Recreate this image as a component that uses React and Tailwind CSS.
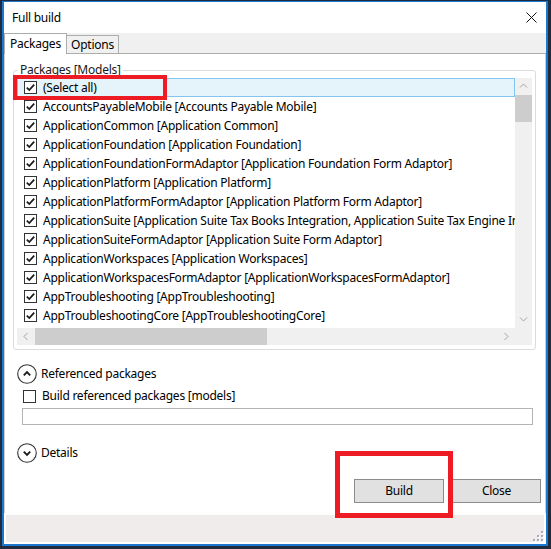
import React from 'react';

const packages = [
  '(Select all)',
  'AccountsPayableMobile [Accounts Payable Mobile]',
  'ApplicationCommon [Application Common]',
  'ApplicationFoundation [Application Foundation]',
  'ApplicationFoundationFormAdaptor [Application Foundation Form Adaptor]',
  'ApplicationPlatform [Application Platform]',
  'ApplicationPlatformFormAdaptor [Application Platform Form Adaptor]',
  'ApplicationSuite [Application Suite Tax Books Integration, Application Suite Tax Engine Integration]',
  'ApplicationSuiteFormAdaptor [Application Suite Form Adaptor]',
  'ApplicationWorkspaces [Application Workspaces]',
  'ApplicationWorkspacesFormAdaptor [ApplicationWorkspacesFormAdaptor]',
  'AppTroubleshooting [AppTroubleshooting]',
  'AppTroubleshootingCore [AppTroubleshootingCore]',
];

const Check = ({ checked }) => (
  <span className="w-[13px] h-[13px] border border-[#333333] bg-white flex items-center justify-center shrink-0">
    {checked && (
      <svg width="11" height="11" viewBox="0 0 11 11">
        <path d="M1.8 5.6 L4.3 8.1 L9.2 2.6" fill="none" stroke="#1a1a1a" strokeWidth="1.7" />
      </svg>
    )}
  </span>
);

const Expander = ({ up, label, className }) => (
  <div className={`flex items-center h-[20px] ml-[12px] ${className}`}>
    <svg width="20" height="20" viewBox="0 0 20 20">
      <circle cx="10" cy="10" r="9.3" fill="white" stroke="#333333" strokeWidth="1.1" />
      <path
        d={up ? 'M6.8 11.4 L10 8.2 L13.2 11.4' : 'M6.8 8.6 L10 11.8 L13.2 8.6'}
        fill="none"
        stroke="#1a1a1a"
        strokeWidth="1.9"
      />
    </svg>
    <span className="ml-[4px]">{label}</span>
  </div>
);

const Arrow = ({ dir }) => {
  const d = {
    up: 'M1 5.5 L4.5 2 L8 5.5',
    down: 'M1 2.5 L4.5 6 L8 2.5',
    left: 'M5.5 1 L2 4.5 L5.5 8',
    right: 'M2.5 1 L6 4.5 L2.5 8',
  }[dir];
  return (
    <svg width="9" height="9" viewBox="0 0 9 9">
      <path d={d} fill="none" stroke="#a3a3a3" strokeWidth="1" />
    </svg>
  );
};

const SizeGrip = () => (
  <svg width="11" height="11" viewBox="0 0 11 11">
    {[
      [8, 0], [4, 4], [8, 4], [0, 8], [4, 8], [8, 8],
    ].map(([x, y]) => (
      <g key={`${x}-${y}`}>
        <rect x={x + 1} y={y + 1} width="2" height="2" fill="#ffffff" />
        <rect x={x} y={y} width="2" height="2" fill="#a9aab9" />
      </g>
    ))}
  </svg>
);

export default function App() {
  return (
    <div className="relative w-[551px] h-[549px] bg-[#1f2b3e] pt-px pl-[2px] pr-[3px] pb-[3px] font-['Segoe_UI','Noto_Sans',sans-serif] text-[12px] tracking-[-0.25px] text-black leading-[16px]">
      <div className="h-full flex flex-col bg-white border-[#1b78cc] border-t border-l-2 border-r-2 border-b-2">
        {/* Title bar */}
        <div className="h-[31px] flex items-center justify-between pl-[8px] pr-[9px] shrink-0">
          <span className="text-[12px]">Full build</span>
          <svg width="11" height="11" viewBox="0 0 11 11">
            <path d="M0.5 0.5 L10.5 10.5 M10.5 0.5 L0.5 10.5" stroke="#111111" strokeWidth="1" />
          </svg>
        </div>

        {/* Tabs */}
        <div className="h-[20px] bg-[#f0f0f0] flex items-end shrink-0 relative">
          <div className="h-[21px] w-[63px] bg-white border-l border-t border-r border-[#acacac] flex items-center justify-center -mb-px z-10 relative">
            Packages
          </div>
          <div className="h-[18px] w-[52px] bg-[#f0f0f0] border-t border-r border-[#acacac] flex items-center justify-center">
            Options
          </div>
        </div>

        {/* Tab page */}
        <div className="h-[460px] shrink-0 border-t border-[#acacac] flex flex-col">
          <div className="flex-1 flex flex-col border-l border-r border-[#cfcfcf]">
            <fieldset className="mt-[8px] ml-[8px] w-[523px] min-w-0 border border-[#dcdcdc] rounded-[3px] px-[3px] pb-[4px]">
              <legend className="ml-[1px] px-[2px] h-[16px] leading-[16px] text-[#1a1a1a]">Packages [Models]</legend>
              <div className="w-[515px] h-[267px] flex flex-col">
                <div className="flex h-[250px]">
                  <div className="w-[498px] h-full overflow-hidden">
                    {packages.map((p, i) => (
                      <div
                        key={p}
                        className={`h-[19px] flex items-center pl-[6px] whitespace-nowrap border ${
                          i === 0 ? 'bg-[#e5f3fb] border-[#84c5ef]' : 'border-transparent'
                        }`}
                      >
                        <Check checked />
                        <span className="ml-[6px]">{p}</span>
                      </div>
                    ))}
                  </div>
                  <div className="w-[17px] h-full bg-[#f0f0f0] flex flex-col">
                    <div className="h-[17px] flex items-center justify-center">
                      <Arrow dir="up" />
                    </div>
                    <div className="h-[27px] bg-[#cdcdcd]" />
                    <div className="flex-1" />
                    <div className="h-[17px] flex items-center justify-center">
                      <Arrow dir="down" />
                    </div>
                  </div>
                </div>
                <div className="flex h-[17px]">
                  <div className="w-[498px] h-full bg-[#f0f0f0] flex">
                    <div className="w-[18px] flex items-center justify-center">
                      <Arrow dir="left" />
                    </div>
                    <div className="w-[232px] bg-[#cdcdcd]" />
                    <div className="flex-1" />
                    <div className="w-[17px] flex items-center justify-center">
                      <Arrow dir="right" />
                    </div>
                  </div>
                  <div className="w-[17px] h-full bg-[#f0f0f0]" />
                </div>
              </div>
            </fieldset>

            <Expander up label="Referenced packages" className="mt-[14px]" />

            <div className="mt-[4px] h-[16px] flex items-center ml-[18px]">
              <Check checked={false} />
              <span className="ml-[6px]">Build referenced packages [models]</span>
            </div>

            <div className="mt-[4px] ml-[17px] w-[511px] h-[17px] border border-[#b4b4b4] bg-white" />

            <Expander label="Details" className="mt-[18px]" />

            <div className="mt-[16px] flex justify-end gap-[8px] pr-[4px]">
              <button className="w-[90px] h-[24px] bg-[#e1e1e1] border border-[#8c8c8c]">Build</button>
              <button className="w-[89px] h-[24px] bg-[#e1e1e1] border border-[#8c8c8c]">Close</button>
            </div>
          </div>
        </div>

        {/* Status bar */}
        <div className="flex-1 pt-[2px] pb-[2px] px-[2px] flex">
          <div className="flex-1 bg-[#efeceb] flex items-end justify-end">
            <SizeGrip />
          </div>
        </div>
      </div>

      {/* Annotation boxes */}
      <div className="absolute left-[13px] top-[75px] w-[154px] h-[25px] border-4 border-[#ed1c24] pointer-events-none" />
      <div className="absolute left-[335px] top-[451px] w-[118px] h-[67px] border-[5px] border-[#ed1c24] pointer-events-none" />
    </div>
  );
}
